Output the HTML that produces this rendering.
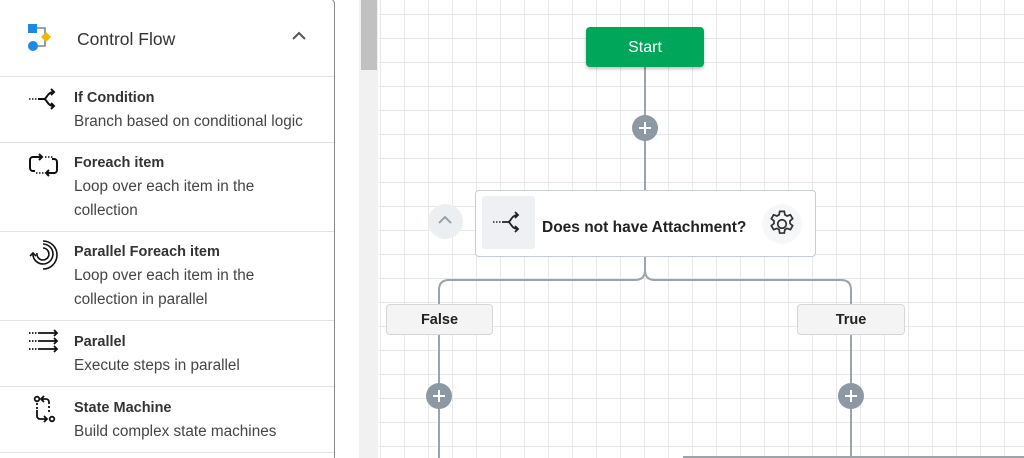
<!DOCTYPE html>
<html><head><style>
*{box-sizing:border-box;margin:0;padding:0}
html,body{width:1024px;height:458px;overflow:hidden}
body{position:relative;font-family:"Liberation Sans",sans-serif;background:#fff}
.canvas{position:absolute;left:378px;top:0;width:646px;height:458px;background-color:#fff;
background-image:linear-gradient(#e8e8e8 1px,transparent 1px),linear-gradient(90deg,#e8e8e8 1px,transparent 1px);
background-size:24px 24px;background-position:2px 14px}
.track{position:absolute;left:359px;top:0;width:19px;height:458px;background:#f1f1f1}
.thumb{position:absolute;left:361px;top:0;width:16px;height:70px;background:#c1c1c1}
.panel{position:absolute;left:0;top:-2px;width:335px;height:460px;border-right:1px solid #8a8a8a;border-top:1px solid #8a8a8a;border-radius:0 6px 0 0;background:#fff;overflow:hidden}
.hdr{position:absolute;left:0;top:0;width:334px;height:78px;border-bottom:1px solid #e3e3e3}
.hdr .t{position:absolute;left:77px;top:30px;font-size:17.5px;color:#333}
.item{position:absolute;left:0;width:334px;border-bottom:1px solid #e3e3e3}
.item .n{position:absolute;left:74px;font-size:14.5px;font-weight:bold;color:#333}
.item .d{position:absolute;left:74px;font-size:15.3px;color:#444;line-height:24px;width:238px}
.item svg{position:absolute;left:28px}
.ln{position:absolute;background:#9aa4ad}
.plus{position:absolute;width:26px;height:26px;border-radius:50%;background:#8c98a3}
.plus::before{content:"";position:absolute;left:7px;top:12px;width:12px;height:2px;background:#fff}
.plus::after{content:"";position:absolute;left:12px;top:7px;width:2px;height:12px;background:#fff}
.lbl{position:absolute;height:31px;background:#f4f4f4;border:1px solid #d3d7dc;border-radius:4px;font-size:14.5px;font-weight:bold;color:#222;text-align:center;line-height:31px}
</style></head><body>
<div class="canvas"></div>
<div class="track"></div><div class="thumb"></div>

<div class="ln" style="left:644px;top:66px;width:2px;height:125px"></div>
<div class="ln" style="left:644px;top:256px;width:2px;height:16px"></div>
<svg style="position:absolute;left:430px;top:256px" width="430" height="202"><path d="M215 14 Q215 24 205 24 L19 24 Q9 24 9 34 L9 202 M215 14 Q215 24 225 24 L411 24 Q421 24 421 34 L421 202" fill="none" stroke="#9aa4ad" stroke-width="2"/></svg>

<div style="position:absolute;left:586px;top:27px;width:118px;height:40px;background:#00a65a;border-radius:4px;box-shadow:0 2px 3px rgba(0,0,0,.25);color:#fff;font-size:16px;text-align:center;line-height:42px">Start</div>
<div class="plus" style="left:632px;top:115px"></div>

<div style="position:absolute;left:428px;top:204px;width:35px;height:35px;border-radius:50%;background:#eceff2"></div>
<svg style="position:absolute;left:436px;top:213px" width="18" height="14"><path d="M3 10 L9 4 L15 10" fill="none" stroke="#98a2ab" stroke-width="2"/></svg>

<div style="position:absolute;left:475px;top:190px;width:341px;height:67px;background:#fff;border:1px solid #c5ccd3;border-radius:4px"></div>
<div style="position:absolute;left:482px;top:196px;width:53px;height:53px;background:#eef0f3;border-radius:3px"></div>
<svg style="position:absolute;left:492px;top:210px" width="34" height="26"><path d="M1 12h1.5M4 12h1.5M7 12h1.5" stroke="#222" stroke-width="1.6"/><path d="M10 12h6M16 12 C19 12 19 5 26 5 M16 12 C19 12 19 19 26 19 M23 2 l3 3 -3 3 M23 16 l3 3 -3 3" fill="none" stroke="#222" stroke-width="1.8"/></svg>
<div style="position:absolute;left:542px;top:219px;font-size:15.5px;font-weight:bold;color:#222">Does not have Attachment?</div>
<div style="position:absolute;left:762px;top:204px;width:40px;height:40px;border-radius:50%;background:#f6f7f8"></div>
<svg style="position:absolute;left:766px;top:208px" width="32" height="32" viewBox="0 0 24 24"><path fill="none" stroke="#333" stroke-width="1.3" d="M10.3 2.5h3.4l.5 2.6 1.6.9 2.5-.9 1.7 2.9-2 1.7v1.9l2 1.7-1.7 2.9-2.5-.9-1.6.9-.5 2.6h-3.4l-.5-2.6-1.6-.9-2.5.9-1.7-2.9 2-1.7v-1.9l-2-1.7 1.7-2.9 2.5.9 1.6-.9z"/><circle cx="12" cy="12" r="3.2" fill="none" stroke="#333" stroke-width="1.3"/></svg>

<div class="lbl" style="left:386px;top:304px;width:107px">False</div>
<div class="lbl" style="left:797px;top:304px;width:108px">True</div>
<div class="plus" style="left:426px;top:383px"></div>
<div class="plus" style="left:838px;top:383px"></div>
<div style="position:absolute;left:683px;top:456px;width:341px;height:2px;background:#9aa4ad"></div>

<div class="panel">
<div class="hdr">
<svg style="position:absolute;left:27px;top:25px" width="30" height="30"><rect x="1" y="0" width="9" height="9" fill="#1e88e5"/><circle cx="6" cy="22" r="5" fill="#1e88e5"/><path d="M10 4h8v18h-7" fill="none" stroke="#7a8791" stroke-width="1.6"/><path d="M19 8 l5 5 -5 5 -5 -5z" fill="#f5b400"/></svg>
<div class="t">Control Flow</div>
<svg style="position:absolute;left:291px;top:31px" width="16" height="12"><path d="M2 9 L8 3 L14 9" fill="none" stroke="#555" stroke-width="2"/></svg>
</div>
<div class="item" style="top:78px;height:66px">
<svg style="top:10px" width="34" height="26"><path d="M1 12h1.5M4 12h1.5M7 12h1.5" stroke="#111" stroke-width="1.6"/><path d="M10 12h6M16 12 C19 12 19 5 26 5 M16 12 C19 12 19 19 26 19 M23 2 l3 3 -3 3 M23 16 l3 3 -3 3" fill="none" stroke="#111" stroke-width="2"/></svg>
<div class="n" style="top:13px">If Condition</div>
<div class="d" style="top:33px">Branch based on conditional logic</div>
</div>
<div class="item" style="top:144px;height:89px">
<svg style="top:9px" width="34" height="28"><path d="M8 5 h-3 a3 3 0 0 0 -3 3 v8 a3 3 0 0 0 3 3 h2 M11 2 l3 3 -3 3 M5 5h9" fill="none" stroke="#111" stroke-width="2"/><path d="M23 21 h3 a3 3 0 0 0 3 -3 v-8 a3 3 0 0 0 -3 -3 h-2 M21 24 l-3 -3 3 -3 M27 21h-9" fill="none" stroke="#111" stroke-width="2"/><path d="M17 5h1.5M20 5h1.5M23 5h1.5M8 21h1.5M11 21h1.5M14 21h1.5" stroke="#111" stroke-width="1.6"/></svg>
<div class="n" style="top:12px">Foreach item</div>
<div class="d" style="top:32px">Loop over each item in the collection</div>
</div>
<div class="item" style="top:233px;height:89px">
<svg style="top:8px" width="34" height="30"><path d="M5 13 a10 10 0 1 0 10 -9" fill="none" stroke="#111" stroke-width="1.6"/><path d="M9 13 a6 6 0 1 0 6 -5" fill="none" stroke="#111" stroke-width="1.6"/><path d="M15 1 a14 14 0 0 1 0 28" fill="none" stroke="#111" stroke-width="1.6"/><path d="M2 16 l3 -3 3 3" fill="none" stroke="#111" stroke-width="1.6"/></svg>
<div class="n" style="top:12px">Parallel Foreach item</div>
<div class="d" style="top:32px">Loop over each item in the collection in parallel</div>
</div>
<div class="item" style="top:322px;height:66px">
<svg style="top:8px" width="34" height="28"><g stroke="#111" stroke-width="1.8" fill="none"><path d="M1 4h1.5M4 4h1.5M7 4h1.5M1 12h1.5M4 12h1.5M7 12h1.5M1 20h1.5M4 20h1.5M7 20h1.5"/><path d="M10 4h19M26 1l3 3-3 3M10 12h19M26 9l3 3-3 3M10 20h19M26 17l3 3-3 3"/></g></svg>
<div class="n" style="top:13px">Parallel</div>
<div class="d" style="top:33px">Execute steps in parallel</div>
</div>
<div class="item" style="top:388px;height:66px">
<svg style="top:8px" width="34" height="30"><g stroke="#111" stroke-width="1.8" fill="none"><circle cx="9" cy="4" r="2.3"/><circle cx="24" cy="24" r="2.3"/><path d="M14 4 h4 a3 3 0 0 1 3 3 v2 M16 1 l-3 3 3 3 M9 15 v6 a3 3 0 0 0 3 3 h6 M16 21 l3 3 -3 3"/><path d="M21 11v8M9 8v6" stroke-dasharray="2 2"/></g></svg>
<div class="n" style="top:13px">State Machine</div>
<div class="d" style="top:33px">Build complex state machines</div>
</div>
</div>
</body></html>
